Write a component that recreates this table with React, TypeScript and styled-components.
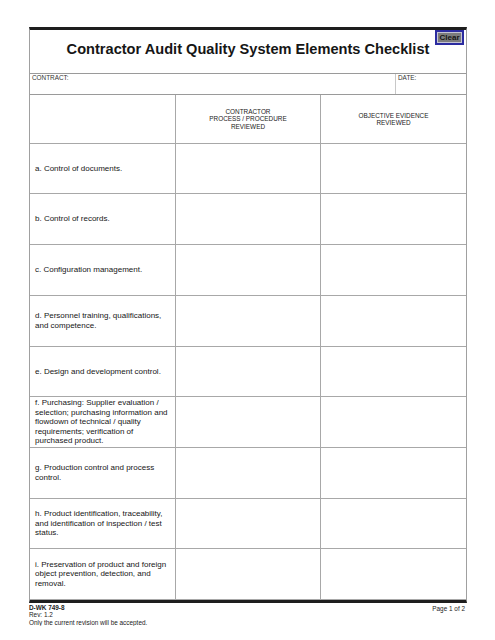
import React from "react";
import styled, { createGlobalStyle } from "styled-components";

const Global = createGlobalStyle`
  html, body { margin: 0; padding: 0; background: #ffffff; }
  body { font-family: "Liberation Sans", Arial, sans-serif; color: #1a1a1a; }
  * { box-sizing: border-box; }
`;

const Page = styled.div`
  padding: 27px 0 0 29px;
  width: 495px;
`;

const Sheet = styled.div`
  position: relative;
  width: 438px;
  border-top: 3px solid #1e1e1e;
  border-bottom: 3px solid #1e1e1e;
  border-left: 1px solid #a0a0a0;
  border-right: 1px solid #a0a0a0;
`;

const TitleBar = styled.div`
  height: 43px;
  display: flex;
  align-items: center;
  justify-content: center;
  padding-bottom: 6px;
`;

const Title = styled.h1`
  margin: 0;
  font-size: 14.6px;
  font-weight: bold;
  color: #161616;
  letter-spacing: 0;
`;

const ClearButton = styled.button`
  position: absolute;
  top: 0;
  right: 2px;
  width: 29px;
  height: 15px;
  padding: 0;
  background: #7d7d7d;
  border: 2px solid #2c2ca0;
  box-shadow: inset 0 0 0 1px #c4c4d4;
  font-family: "Liberation Sans", Arial, sans-serif;
  font-size: 8px;
  font-weight: bold;
  color: #151515;
  line-height: 11px;
`;

const InfoRow = styled.div`
  display: grid;
  grid-template-columns: 1fr 70px;
  height: 22px;
  border-top: 1px solid #9a9a9a;
  border-bottom: 1px solid #9a9a9a;
`;

const InfoCell = styled.div<{ $divider?: boolean }>`
  padding: 0 2px;
  font-size: 6.4px;
  line-height: 7px;
  color: #333;
  border-right: ${(p) => (p.$divider ? "1px solid #c8c8c8" : "none")};
`;

const Grid = styled.div`
  display: grid;
  grid-template-columns: 146px 145px 1fr;
`;

const Cell = styled.div<{ $h: number; $last?: boolean; $header?: boolean }>`
  height: ${(p) => p.$h}px;
  border-right: ${(p) => (p.$last ? "none" : "1px solid #a8a8a8")};
  border-bottom: 1px solid #a8a8a8;
  display: flex;
  align-items: center;
  justify-content: ${(p) => (p.$header ? "center" : "flex-start")};
  padding: 0 4px 0 4px;
`;

const HeaderText = styled.div`
  font-size: 6.4px;
  line-height: 7.2px;
  text-align: center;
  color: #222;
`;

const ItemText = styled.div`
  font-size: 8px;
  line-height: 9.6px;
  color: #161616;
  padding-left: 1px;
`;

const Footer = styled.div`
  width: 438px;
  display: flex;
  justify-content: space-between;
  padding: 1px 2px 0 0;
  font-size: 6.4px;
  line-height: 7.3px;
  color: #222;
`;

const FooterLeft = styled.div`
  display: flex;
  flex-direction: column;
`;

const FormId = styled.span`
  font-weight: bold;
`;

const PageNum = styled.span`
  padding-top: 0.5px;
`;

const items: { text: React.ReactNode; h: number }[] = [
  { text: "a. Control of documents.", h: 50 },
  { text: "b. Control of records.", h: 51 },
  { text: "c. Configuration management.", h: 51 },
  { text: <>d. Personnel training, qualifications,<br />and competence.</>, h: 51 },
  { text: "e. Design and development control.", h: 50 },
  {
    text: (
      <>
        f. Purchasing: Supplier evaluation /<br />
        selection; purchasing information and<br />
        flowdown of technical / quality<br />
        requirements; verification of<br />
        purchased product.
      </>
    ),
    h: 51,
  },
  { text: <>g. Production control and process<br />control.</>, h: 51 },
  {
    text: (
      <>
        h. Product identification, traceability,<br />
        and identification of inspection / test<br />
        status.
      </>
    ),
    h: 50,
  },
  {
    text: (
      <>
        i. Preservation of product and foreign<br />
        object prevention, detection, and<br />
        removal.
      </>
    ),
    h: 51,
  },
];

export default function App() {
  return (
    <>
      <Global />
      <Page>
        <Sheet>
          <ClearButton type="button">Clear</ClearButton>
          <TitleBar>
            <Title>Contractor Audit Quality System Elements Checklist</Title>
          </TitleBar>
          <InfoRow>
            <InfoCell $divider>CONTRACT:</InfoCell>
            <InfoCell>DATE:</InfoCell>
          </InfoRow>
          <Grid>
            <Cell $h={49} $header />
            <Cell $h={49} $header>
              <HeaderText>
                CONTRACTOR
                <br />
                PROCESS / PROCEDURE
                <br />
                REVIEWED
              </HeaderText>
            </Cell>
            <Cell $h={49} $header $last>
              <HeaderText>
                OBJECTIVE EVIDENCE
                <br />
                REVIEWED
              </HeaderText>
            </Cell>
            {items.map((it, i) => (
              <React.Fragment key={i}>
                <Cell $h={it.h}>
                  <ItemText>{it.text}</ItemText>
                </Cell>
                <Cell $h={it.h} />
                <Cell $h={it.h} $last />
              </React.Fragment>
            ))}
          </Grid>
        </Sheet>
        <Footer>
          <FooterLeft>
            <FormId>D-WK 749-8</FormId>
            <span>Rev: 1.2</span>
            <span>Only the current revision will be accepted.</span>
          </FooterLeft>
          <PageNum>Page 1 of 2</PageNum>
        </Footer>
      </Page>
    </>
  );
}
